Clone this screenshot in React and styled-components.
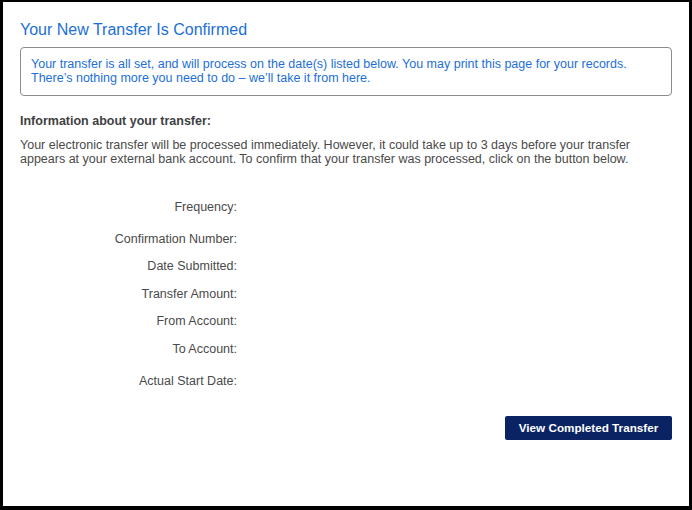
import React from "react"
import styled, { createGlobalStyle } from "styled-components"

const GlobalStyle = createGlobalStyle`
  html, body {
    margin: 0;
    padding: 0;
    background: #fff;
  }
  body {
    font-family: "Liberation Sans", Arial, sans-serif;
  }
`

const Frame = styled.div`
  box-sizing: border-box;
  width: 692px;
  height: 510px;
  border: 3px solid #000;
  border-top-width: 2px;
  border-bottom-width: 4px;
  background: #fff;
  padding: 19px 17px 0 17px;
  display: flex;
  flex-direction: column;
`

const Title = styled.h1`
  margin: 0;
  font-size: 16px;
  line-height: 18px;
  font-weight: normal;
  color: #1c6fd6;
`

const Notice = styled.div`
  margin-top: 8px;
  border: 1px solid #8c8c8c;
  border-radius: 4px;
  padding: 9px 10px 10px;
  font-size: 12.5px;
  line-height: 14px;
  color: #1c6fd6;
`

const SectionHeading = styled.h2`
  margin: 18px 0 0;
  font-size: 12.5px;
  line-height: 14px;
  font-weight: bold;
  color: #3f3f3f;
`

const Paragraph = styled.p`
  margin: 10px 0 0;
  font-size: 12.5px;
  line-height: 14px;
  color: #4a4a4a;
`

const Details = styled.div`
  margin-top: 27px;
  display: flex;
  flex-direction: column;
`

const Row = styled.div`
  display: grid;
  grid-template-columns: 217px 1fr;
  align-items: center;
  height: 27.5px;
  margin-top: ${(p) => (p.$spaced ? "4.5px" : "0")};
`

const Label = styled.span`
  text-align: right;
  font-size: 12.5px;
  line-height: 14px;
  color: #4a4a4a;
`

const Actions = styled.div`
  display: flex;
  justify-content: flex-end;
  margin-top: 21px;
`

const Button = styled.button`
  height: 24px;
  width: 167px;
  border: none;
  border-radius: 2px;
  background: #0a2463;
  color: #fff;
  font-family: "Liberation Sans", Arial, sans-serif;
  font-size: 11.7px;
  font-weight: bold;
  cursor: pointer;
  padding: 0;
`

const fields = [
  { label: "Frequency:" },
  { label: "Confirmation Number:", spaced: true },
  { label: "Date Submitted:" },
  { label: "Transfer Amount:" },
  { label: "From Account:" },
  { label: "To Account:" },
  { label: "Actual Start Date:", spaced: true },
]

export default function App() {
  return (
    <>
      <GlobalStyle />
      <Frame>
        <Title>Your New Transfer Is Confirmed</Title>
        <Notice>
          Your transfer is all set, and will process on the date(s) listed below. You may print this page for your records.
          <br />
          There’s nothing more you need to do – we’ll take it from here.
        </Notice>
        <SectionHeading>Information about your transfer:</SectionHeading>
        <Paragraph>
          Your electronic transfer will be processed immediately. However, it could take up to 3 days before your transfer
          <br />
          appears at your external bank account. To confirm that your transfer was processed, click on the button below.
        </Paragraph>
        <Details>
          {fields.map((f) => (
            <Row key={f.label} $spaced={f.spaced}>
              <Label>{f.label}</Label>
              <span />
            </Row>
          ))}
        </Details>
        <Actions>
          <Button>View Completed Transfer</Button>
        </Actions>
      </Frame>
    </>
  )
}
